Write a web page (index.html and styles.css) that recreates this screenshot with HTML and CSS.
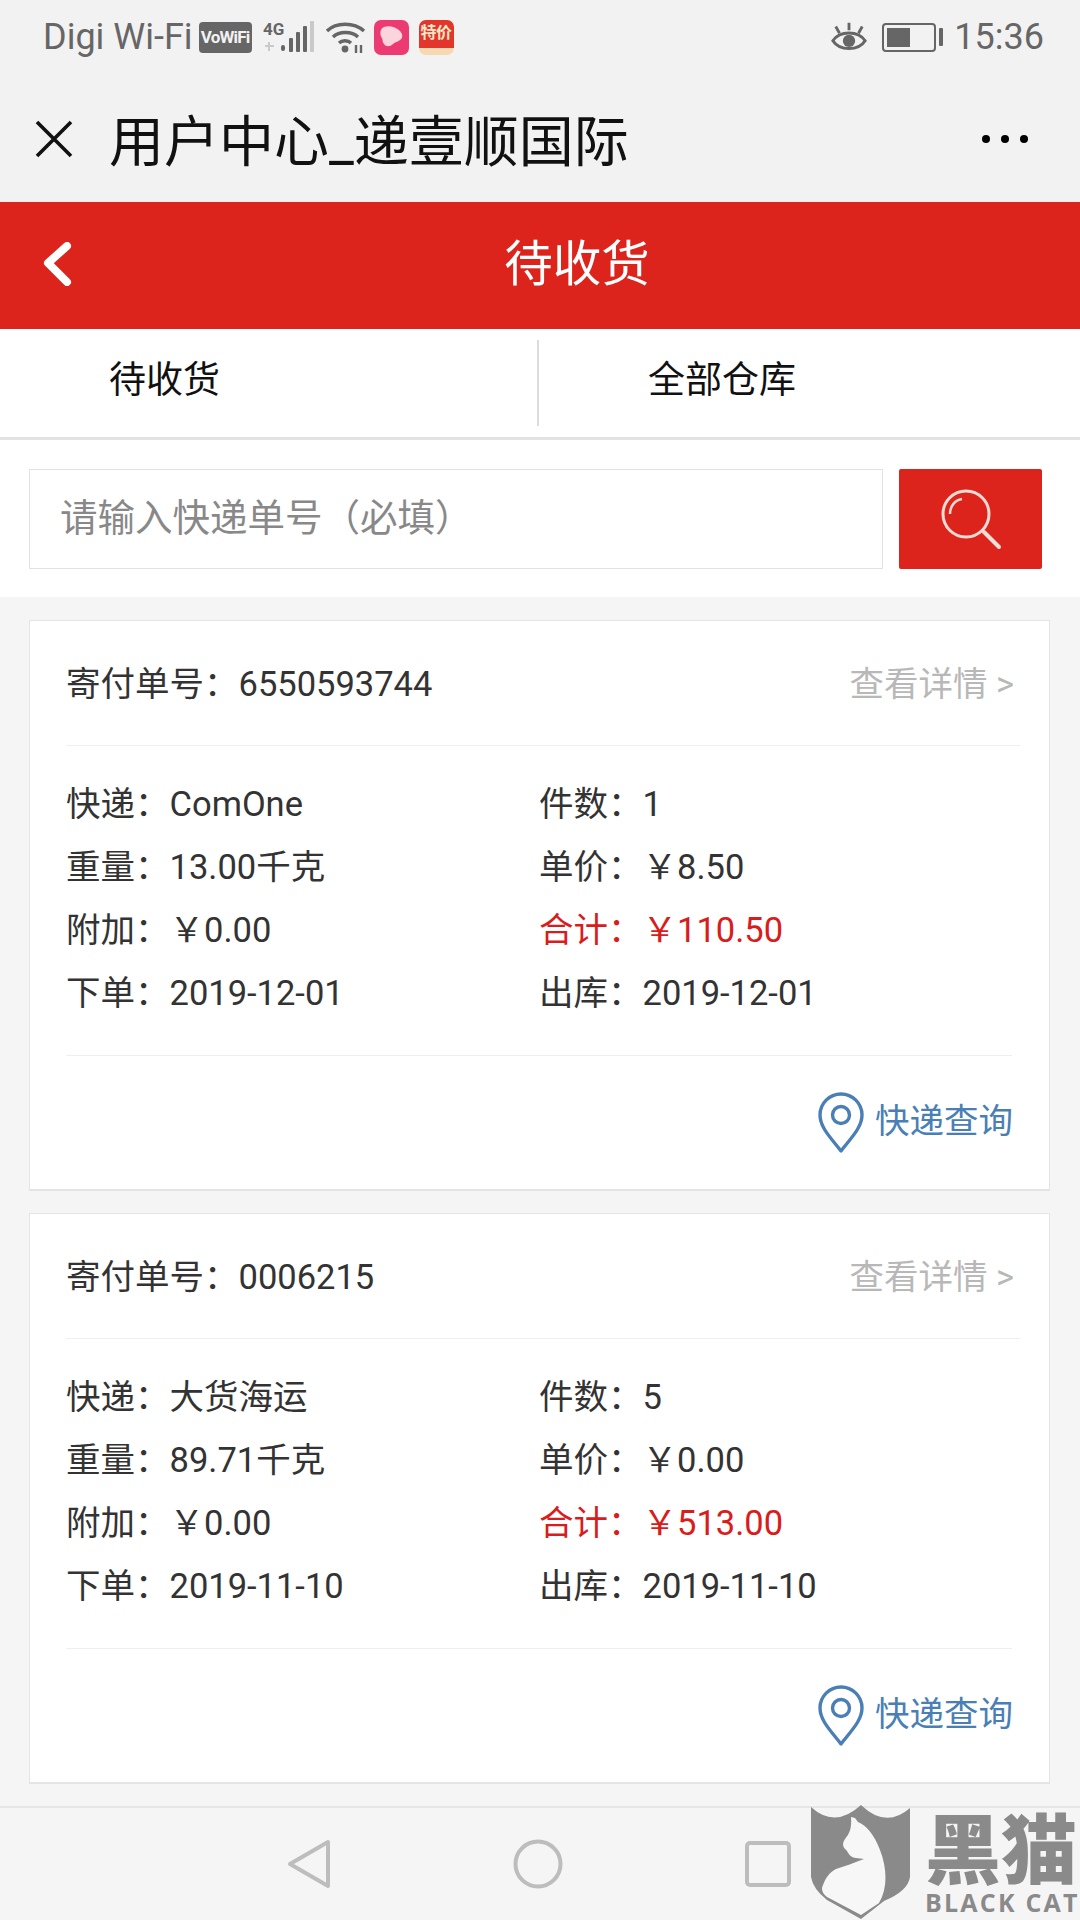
FILE: index.html
```html
<!DOCTYPE html>
<html lang="zh-CN">
<head>
    <meta charset="UTF-8">
    <meta name="viewport" content="width=device-width, initial-scale=1.0">
    <title>用户中心_递壹顺国际</title>
    <link rel="stylesheet" href="styles.css">
</head>
<body>
    <div class="phone">
        <div class="status-bar">
            <div class="status-left">
                <span class="carrier">Digi Wi-Fi</span>
                <span class="vowifi">VoWiFi</span>
                <svg class="signal" width="52" height="34" viewBox="0 0 52 34">
                    <g fill="#666">
                        <rect x="18" y="25" width="4" height="6" rx="2"/>
                        <rect x="26" y="18" width="4" height="14" rx="1"/>
                        <rect x="33" y="12" width="4" height="20" rx="1"/>
                        <rect x="40" y="6" width="4" height="26" rx="1"/>
                    </g>
                    <rect x="47" y="1" width="4" height="31" rx="1" fill="#c9c9c9"/>
                    <text x="0" y="15" class="signal-label">4G</text>
                    <path d="M2 26h9M6 22v9" stroke="#c9c9c9" stroke-width="2" fill="none"/>
                </svg>
                <svg class="wifi" width="40" height="34" viewBox="0 0 40 34">
                    <g fill="none" stroke="#666" stroke-width="3.4">
                        <path d="M1 11C10 2 28 2 38 11"/>
                        <path d="M7 17c6-6 19-6 25 0"/>
                        <path d="M13 23c3-3 9-3 12 0"/>
                    </g>
                    <circle cx="19" cy="29" r="3.4" fill="#666"/>
                    <path d="M30 25v8M35 25v8" stroke="#666" stroke-width="2.4"/>
                </svg>
                <span class="app-icon app-pink">
                    <svg width="24" height="22" viewBox="0 0 24 22"><path d="M5 1c5-2 12 0 16 4 3 3 3 7 0 9-2 2-5 2-7 4-3 3-7 3-9 0-2-2-1-4-2-6C1 10 0 3 5 1z" fill="#fbd5de"/></svg>
                </span>
                <span class="app-icon app-red">特价</span>
            </div>
            <div class="status-right">
                <svg width="36" height="32" viewBox="0 0 38 32">
                    <path d="M2 20C9 9 29 9 36 20 29 31 9 31 2 20z" fill="none" stroke="#666" stroke-width="3.2"/>
                    <circle cx="19" cy="20" r="6.5" fill="#666"/>
                    <path d="M19 1v8M5 5l4 7M33 5l-4 7" stroke="#666" stroke-width="3"/>
                </svg>
                <div class="battery">
                    <div class="battery-body"><div class="battery-fill"></div></div>
                    <div class="battery-nub"></div>
                </div>
                <span class="clock">15:36</span>
            </div>
        </div>

        <div class="title-bar">
            <svg class="close-icon" width="38" height="38" viewBox="0 0 38 38">
                <path d="M2 2l34 34M36 2L2 36" stroke="#111" stroke-width="3.6" fill="none"/>
            </svg>
            <h1 class="page-title">用户中心_递壹顺国际</h1>
            <div class="more-dots"><i></i><i></i><i></i></div>
        </div>

        <div class="red-header">
            <svg class="back-icon" width="32" height="44" viewBox="0 0 32 44">
                <path d="M26 4L7 21l19 19" stroke="#fff" stroke-width="8" stroke-linecap="round" stroke-linejoin="round" fill="none"/>
            </svg>
            <span class="red-title">待收货</span>
        </div>

        <div class="tabs">
            <div class="tab tab-first">待收货</div>
            <div class="tab tab-second">全部仓库</div>
        </div>

        <div class="search-area">
            <div class="search-input">请输入快递单号（必填）</div>
            <div class="search-btn">
                <svg width="62" height="62" viewBox="0 0 62 62">
                    <circle cx="26" cy="26" r="23" fill="none" stroke="#f9dcd4" stroke-width="3"/>
                    <path d="M10 26c0-8 5-14 12-15" fill="none" stroke="#f9dcd4" stroke-width="2.5"/>
                    <path d="M44 44l15 15" stroke="#f9dcd4" stroke-width="4" stroke-linecap="round"/>
                </svg>
            </div>
        </div>

        <div class="card-list">
            <div class="card">
                <div class="card-head">
                    <span>寄付单号：6550593744</span>
                    <span class="detail-link">查看详情 &gt;</span>
                </div>
                <div class="fields">
                    <div>快递：ComOne</div>
                    <div>件数：1</div>
                    <div>重量：13.00千克</div>
                    <div>单价：￥8.50</div>
                    <div>附加：￥0.00</div>
                    <div class="total">合计：￥110.50</div>
                    <div>下单：2019-12-01</div>
                    <div>出库：2019-12-01</div>
                </div>
                <div class="card-foot">
                    <svg class="pin" width="46" height="62" viewBox="0 0 46 62">
                        <path d="M23 59C14 47 2 36 2 23a21 21 0 0 1 42 0C44 36 32 47 23 59z" fill="none" stroke="#4a7fb5" stroke-width="3.4" stroke-linejoin="round"/>
                        <circle cx="23" cy="23" r="8.5" fill="none" stroke="#4a7fb5" stroke-width="3.4"/>
                    </svg>
                    <span class="track-link">快递查询</span>
                </div>
            </div>

            <div class="card">
                <div class="card-head">
                    <span>寄付单号：0006215</span>
                    <span class="detail-link">查看详情 &gt;</span>
                </div>
                <div class="fields">
                    <div>快递：大货海运</div>
                    <div>件数：5</div>
                    <div>重量：89.71千克</div>
                    <div>单价：￥0.00</div>
                    <div>附加：￥0.00</div>
                    <div class="total">合计：￥513.00</div>
                    <div>下单：2019-11-10</div>
                    <div>出库：2019-11-10</div>
                </div>
                <div class="card-foot">
                    <svg class="pin" width="46" height="62" viewBox="0 0 46 62">
                        <path d="M23 59C14 47 2 36 2 23a21 21 0 0 1 42 0C44 36 32 47 23 59z" fill="none" stroke="#4a7fb5" stroke-width="3.4" stroke-linejoin="round"/>
                        <circle cx="23" cy="23" r="8.5" fill="none" stroke="#4a7fb5" stroke-width="3.4"/>
                    </svg>
                    <span class="track-link">快递查询</span>
                </div>
            </div>
        </div>

        <div class="nav-bar">
            <svg width="44" height="50" viewBox="0 0 44 50">
                <path d="M41 3v44L3 25z" fill="none" stroke="#bdbdbd" stroke-width="4" stroke-linejoin="round"/>
            </svg>
            <svg width="50" height="50" viewBox="0 0 50 50">
                <circle cx="25" cy="25" r="22.5" fill="none" stroke="#bdbdbd" stroke-width="4"/>
            </svg>
            <svg width="46" height="46" viewBox="0 0 46 46">
                <rect x="2" y="2" width="42" height="42" rx="3" fill="none" stroke="#bdbdbd" stroke-width="4"/>
            </svg>
        </div>

        <!-- 水印 -->
        <div class="watermark">
            <svg width="99" height="115" viewBox="0 0 99 115">
                <path d="M0 2Q24 24 50 0 75 24 99 3V72Q97 86 73 96L50 114 16 95Q2 84 0 72z" fill="#8a8a8a"/>
                <path d="M44 13l3 4c8 3 16 12 22 28 7 18 8 38-1 53L50 110 16 92c-5-4-6-8-4-12 3-8 7-13 13-16 9-3 18-6 28-10l-8-1c-4 0-7-3-9-7-3-3-6-6-2-12 4-5 7-10 6-22z" fill="#f8f7f8"/>
            </svg>
            <div class="mark-text">
                <div class="mark-cn">黑猫</div>
                <div class="mark-en">BLACK CAT</div>
            </div>
        </div>
    </div>
</body>
</html>
```

FILE: styles.css
```css
* {
    margin: 0;
    padding: 0;
    box-sizing: border-box;
}

body {
    font-family: Roboto, 'Noto Sans CJK SC', sans-serif;
    background: #f6f5f6;
}

.phone {
    position: relative;
    width: 1080px;
    height: 1920px;
    overflow: hidden;
    display: flex;
    flex-direction: column;
    background: #f6f5f6;
}

.status-bar {
    height: 76px;
    padding: 18px 36px 0 43px;
    background: #f2f2f2;
    display: flex;
    justify-content: space-between;
    align-items: flex-start;
    color: #666;
}

.status-left, .status-right {
    display: flex;
    align-items: center;
    height: 38px;
}

.carrier {
    font-size: 36px;
    margin-right: 6px;
}

.vowifi {
    width: 53px;
    height: 31px;
    background: #666;
    color: #f2f2f2;
    border-radius: 4px;
    font-size: 17px;
    font-weight: 700;
    line-height: 31px;
    text-align: center;
    letter-spacing: -0.8px;
    margin-right: 11px;
}

.signal {
    margin-right: 11px;
}

.signal-label {
    font-size: 17px;
    font-weight: 700;
    fill: #666;
}

.wifi {
    margin-right: 8px;
}

.app-icon {
    width: 35px;
    height: 35px;
    border-radius: 7px;
    display: flex;
    align-items: center;
    justify-content: center;
}

.app-pink {
    background: #ec3a72;
    margin-right: 10px;
}

.app-red {
    background: linear-gradient(#e2352b 80%, #f6d9b0 80%);
    color: #fbe8c8;
    font-size: 16px;
    font-weight: 700;
    line-height: 26px;
    align-items: flex-start;
    white-space: nowrap;
    letter-spacing: -0.5px;
}

.battery {
    display: flex;
    align-items: center;
    margin-left: 15px;
    margin-right: 11px;
}

.battery-body {
    width: 54px;
    height: 29px;
    border: 2px solid #666;
    border-radius: 4px;
    padding: 3px;
}

.battery-fill {
    width: 23px;
    height: 100%;
    background: #666;
}

.battery-nub {
    width: 4px;
    height: 18px;
    background: #666;
    margin-left: 3px;
    border-radius: 1px;
}

.clock {
    font-size: 36px;
}

.title-bar {
    height: 126px;
    padding: 0 52px 0 35px;
    background: #f2f2f2;
    display: flex;
    align-items: center;
}

.close-icon {
    margin-right: 36px;
}

.page-title {
    flex: 1;
    font-size: 55px;
    font-weight: 400;
    color: #111;
    margin-bottom: 5px;
}

.more-dots {
    display: flex;
    gap: 11px;
}

.more-dots i {
    width: 8px;
    height: 8px;
    border-radius: 50%;
    background: #000;
}

.red-header {
    position: relative;
    height: 127px;
    background: #dc241c;
    display: flex;
    align-items: center;
    justify-content: center;
    padding: 0 0 12px 74px;
}

.back-icon {
    position: absolute;
    left: 41px;
    top: 40px;
}

.red-title {
    font-size: 48.5px;
    color: #fff;
}

.tabs {
    height: 111px;
    background: #fff;
    border-bottom: 3px solid #e2e2e2;
    display: flex;
    align-items: center;
}

.tab {
    height: 86px;
    line-height: 82px;
    font-size: 37px;
    color: #111;
}

.tab-first {
    width: 539px;
    padding-left: 109px;
    border-right: 2px solid #dcdcdc;
}

.tab-second {
    flex: 1;
    padding-left: 109px;
}

.search-area {
    height: 157px;
    background: #fff;
    padding: 29px 38px 0 29px;
    display: flex;
    gap: 16px;
}

.search-input {
    flex: 1;
    height: 100px;
    border: 1px solid #e2e2e2;
    font-size: 37.5px;
    line-height: 97px;
    padding-left: 30px;
    color: #888;
}

.search-btn {
    width: 143px;
    height: 100px;
    background: #dc241c;
    border-radius: 2px;
    display: flex;
    align-items: center;
    justify-content: center;
}

.card-list {
    flex: 1;
    padding: 23px 30px 0 29px;
    display: flex;
    flex-direction: column;
    gap: 22px;
}

.card {
    height: 571px;
    background: #fff;
    border: 1px solid #e4e4e4;
    border-bottom-width: 2px;
    padding: 0 29px 0 36px;
    font-size: 34.5px;
    color: #333;
}

.card-head {
    height: 125px;
    border-bottom: 1px solid #efefef;
    display: flex;
    justify-content: space-between;
    align-items: center;
    padding: 0 6px 4px 0;
}

.detail-link {
    color: #b8b8b8;
}

.fields {
    display: grid;
    grid-template-columns: 473px 1fr;
    grid-auto-rows: 63px;
    align-items: center;
    margin-right: 8px;
    padding: 23px 0 34px;
    border-bottom: 1px solid #efefef;
}

.total {
    color: #d91c1c;
}

.card-foot {
    height: 116px;
    padding: 8px 7px 0 0;
    display: flex;
    justify-content: flex-end;
    align-items: center;
    gap: 11px;
}

.pin {
    margin-top: 10px;
}

.track-link {
    color: #4a7fb5;
    font-size: 34.5px;
}

.nav-bar {
    height: 114px;
    border-top: 2px solid #e6e6e6;
    display: flex;
    align-items: center;
    padding: 0 0 0 287px;
    gap: 182px;
}

.watermark {
    position: absolute;
    left: 811px;
    top: 1805px;
    display: flex;
    gap: 15px;
}

.mark-text {
    color: #8a8a8a;
    padding-top: 10px;
    width: 154px;
}

.mark-cn {
    font-size: 76px;
    font-weight: 900;
    line-height: 74px;
    white-space: nowrap;
}

.mark-en {
    font-size: 25px;
    font-weight: 700;
    font-family: 'Open Sans', sans-serif;
    line-height: 26px;
    letter-spacing: 2.2px;
    white-space: nowrap;
}
```
